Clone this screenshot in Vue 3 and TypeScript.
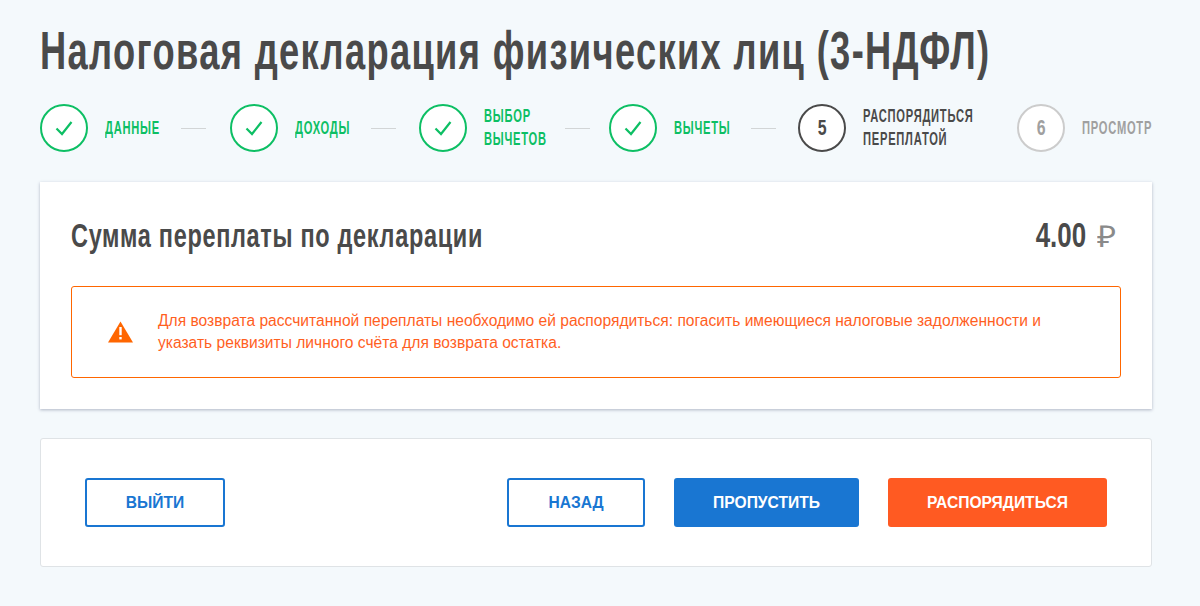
<script setup lang="ts">
interface Step {
  num: number;
  lines: string[];
  state: "done" | "current" | "next";
  width: number;
}

const steps: Step[] = [
  { num: 1, lines: ["Данные"], state: "done", width: 56 },
  { num: 2, lines: ["Доходы"], state: "done", width: 56 },
  { num: 3, lines: ["Выбор", "вычетов"], state: "done", width: 61 },
  { num: 4, lines: ["Вычеты"], state: "done", width: 57 },
  { num: 5, lines: ["Распорядиться", "переплатой"], state: "current", width: 111 },
  { num: 6, lines: ["Просмотр"], state: "next", width: 70 },
];
</script>

<template>
  <div class="page">
    <h1 class="title">Налоговая декларация физических лиц (3-НДФЛ)</h1>

    <div class="steps">
      <div v-for="(step, i) in steps" :key="step.num" class="step" :class="step.state">
        <div class="circle">
          <svg v-if="step.state === 'done'" width="18" height="16" viewBox="0 0 18 16">
            <path d="M1.5 8.5 L7 14 L16.5 2" fill="none" stroke="#0dbf64" stroke-width="2.2" />
          </svg>
          <span v-else class="num">{{ step.num }}</span>
        </div>
        <div class="label" :style="{ width: step.width + 'px' }">
          <div v-for="line in step.lines" :key="line" class="label-line">{{ line }}</div>
        </div>
        <div v-if="i < 4" class="connector"></div>
      </div>
    </div>

    <div class="card">
      <div class="sum-row">
        <h2 class="sum-title">Сумма переплаты по декларации</h2>
        <div class="sum-value"><span class="amount">4.00</span><span class="rub">₽</span></div>
      </div>
      <div class="alert">
        <svg class="alert-icon" width="25" height="22" viewBox="0 0 25 22">
          <path d="M12.5 0.5 L25 21.5 H0 Z" fill="#ff6600" />
          <rect x="11.3" y="6" width="2.4" height="8.2" fill="#fff" />
          <rect x="11.3" y="16" width="2.4" height="2.4" fill="#fff" />
        </svg>
        <p class="alert-text">
          Для возврата рассчитанной переплаты необходимо ей распорядиться: погасить имеющиеся налоговые задолженности и
          указать реквизиты личного счёта для возврата остатка.
        </p>
      </div>
    </div>

    <div class="actions">
      <button class="btn outline exit">Выйти</button>
      <div class="actions-right">
        <button class="btn outline back">Назад</button>
        <button class="btn blue skip">Пропустить</button>
        <button class="btn orange manage">Распорядиться</button>
      </div>
    </div>
  </div>
</template>

<style scoped>
.page {
  box-sizing: border-box;
  width: 1200px;
  height: 606px;
  padding: 20px 48px 0 40px;
  background: #f4f9fc;
  font-family: "Liberation Sans", Arial, sans-serif;
  overflow: hidden;
}
.title {
  margin: 0;
  font-size: 54px;
  line-height: 60px;
  font-weight: 700;
  letter-spacing: 2px;
  color: #4a4a4a;
  white-space: nowrap;
  transform: scaleX(0.672);
  transform-origin: left center;
}
.steps {
  display: flex;
  align-items: center;
  height: 48px;
  margin-top: 24px;
}
.step {
  flex: none;
  width: 189.5px;
  display: flex;
  align-items: center;
  gap: 17px;
}
.step.current {
  width: auto;
}
.step.next {
  width: auto;
  margin-left: auto;
}
.circle {
  flex: none;
  box-sizing: border-box;
  width: 48px;
  height: 48px;
  border-radius: 50%;
  border: 2px solid #0dbf64;
  background: #fff;
  display: flex;
  align-items: center;
  justify-content: center;
  font-weight: 700;
  font-size: 22px;
}
.num {
  display: inline-block;
  transform: scaleX(0.72);
}
.label {
  flex: none;
  font-weight: 700;
  font-size: 18px;
  line-height: 23px;
  letter-spacing: 1.2px;
  text-transform: uppercase;
  color: #0dbf64;
  white-space: nowrap;
}
.label-line {
  transform: scaleX(0.62);
  transform-origin: left center;
}
.current .circle {
  border-color: #4a4a4a;
  color: #4a4a4a;
}
.current .label {
  color: #4a4a4a;
}
.next .circle {
  border-color: #cccccc;
  color: #a0a0a0;
}
.next .label {
  color: #a0a0a0;
}
.connector {
  flex: none;
  width: 25px;
  height: 1px;
  margin-left: 3px;
  background: #d2d5d6;
}
.card {
  box-sizing: border-box;
  height: 227px;
  margin-top: 30px;
  padding: 29px 31px 0;
  background: #fff;
  box-shadow: 0 1px 3px rgba(90, 100, 130, 0.45);
}
.sum-row {
  display: flex;
  align-items: center;
  justify-content: space-between;
  height: 48px;
  padding-right: 5px;
}
.sum-title {
  margin: 0;
  font-size: 34px;
  font-weight: 700;
  letter-spacing: 1px;
  color: #4a4a4a;
  white-space: nowrap;
  transform: scaleX(0.69);
  transform-origin: left center;
}
.sum-value {
  display: flex;
  align-items: center;
  gap: 13px;
  color: #4a4a4a;
}
.amount {
  display: inline-block;
  font-size: 35px;
  font-weight: 700;
  transform: scaleX(0.74);
  transform-origin: right center;
}
.rub {
  font-size: 30px;
  color: #8a8a8a;
  transform: scaleX(1.1);
  transform-origin: right center;
}
.alert {
  box-sizing: border-box;
  display: flex;
  align-items: center;
  height: 92px;
  margin-top: 27px;
  padding: 0 36px;
  border: 1px solid #ff6600;
  border-radius: 3px;
}
.alert-icon {
  flex: none;
  margin-right: 25px;
}
.alert-text {
  margin: 0;
  font-size: 15.6px;
  line-height: 22px;
  color: #ff5f1f;
}
.actions {
  box-sizing: border-box;
  display: flex;
  align-items: center;
  justify-content: space-between;
  height: 129px;
  margin-top: 29px;
  padding: 0 44px;
  background: #fff;
  border: 1px solid #dfe3e6;
  border-radius: 3px;
}
.actions-right {
  display: flex;
  gap: 29px;
}
.btn {
  box-sizing: border-box;
  height: 49px;
  border-radius: 3px;
  font-family: "Liberation Sans", Arial, sans-serif;
  font-size: 15.6px;
  font-weight: 700;
  text-transform: uppercase;
  padding: 0;
}
.outline {
  background: #fff;
  border: 2px solid #1976d2;
  color: #1976d2;
}
.blue {
  background: #1976d2;
  border: none;
  color: #fff;
}
.orange {
  background: #ff5a22;
  border: none;
  color: #fff;
}
.exit {
  width: 140px;
}
.back {
  width: 138px;
}
.skip {
  width: 185px;
}
.manage {
  width: 219px;
}
</style>
